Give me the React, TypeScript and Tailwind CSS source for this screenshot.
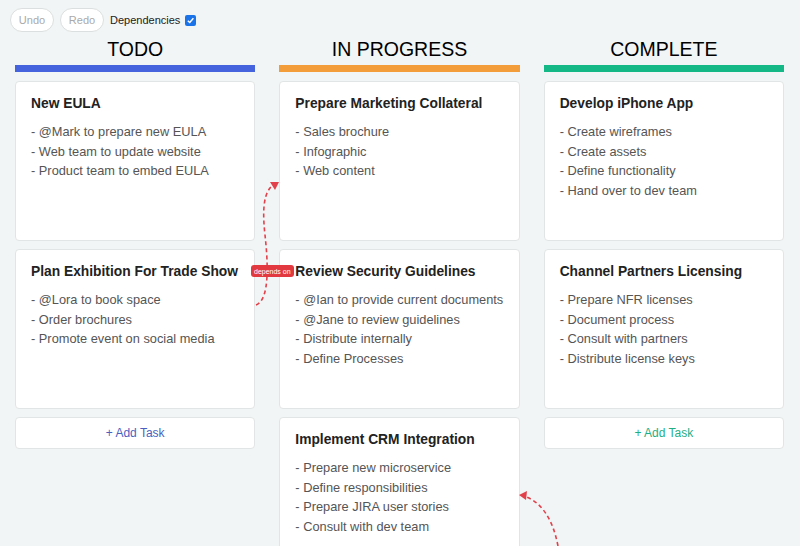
import React from 'react';

type Task = { title: string; items: string[] };

const columns: {
  name: string;
  bar: string;
  add?: string;
  tasks: Task[];
}[] = [
  {
    name: 'TODO',
    bar: 'bg-[#4463dd]',
    add: 'text-[#4a5fc1]',
    tasks: [
      {
        title: 'New EULA',
        items: ['@Mark to prepare new EULA', 'Web team to update website', 'Product team to embed EULA'],
      },
      {
        title: 'Plan Exhibition For Trade Show',
        items: ['@Lora to book space', 'Order brochures', 'Promote event on social media'],
      },
    ],
  },
  {
    name: 'IN PROGRESS',
    bar: 'bg-[#f39c3a]',
    tasks: [
      {
        title: 'Prepare Marketing Collateral',
        items: ['Sales brochure', 'Infographic', 'Web content'],
      },
      {
        title: 'Review Security Guidelines',
        items: [
          '@Ian to provide current documents',
          '@Jane to review guidelines',
          'Distribute internally',
          'Define Processes',
        ],
      },
      {
        title: 'Implement CRM Integration',
        items: [
          'Prepare new microservice',
          'Define responsibilities',
          'Prepare JIRA user stories',
          'Consult with dev team',
        ],
      },
    ],
  },
  {
    name: 'COMPLETE',
    bar: 'bg-[#13b886]',
    add: 'text-[#1fae84]',
    tasks: [
      {
        title: 'Develop iPhone App',
        items: ['Create wireframes', 'Create assets', 'Define functionality', 'Hand over to dev team'],
      },
      {
        title: 'Channel Partners Licensing',
        items: ['Prepare NFR licenses', 'Document process', 'Consult with partners', 'Distribute license keys'],
      },
    ],
  },
];

function Card({ task }: { task: Task }) {
  return (
    <div className="h-[160px] shrink-0 rounded-[4px] border border-[#e2e5e5] bg-white pl-[15px] pr-[8px] pt-[12px]">
      <h3 className="whitespace-nowrap text-[13.8px] font-bold leading-[20px] text-[#222]">{task.title}</h3>
      <ul className="mt-[8px] whitespace-nowrap text-[12.8px] leading-[19.5px] text-[#555]">
        {task.items.map((item) => (
          <li key={item}>- {item}</li>
        ))}
      </ul>
    </div>
  );
}

export default function App() {
  return (
    <div
      className="relative h-[546px] w-[800px] overflow-hidden bg-[#f2f5f5]"
      style={{ fontFamily: '"Liberation Sans", Arial, sans-serif' }}
    >
      {/* toolbar */}
      <div className="flex items-center gap-[6px] pl-[10px] pt-[8px]">
        <button className="h-[24px] w-[44px] rounded-full border border-[#dcdfdf] bg-white text-[11px] text-[#aaa]">
          Undo
        </button>
        <button className="h-[24px] w-[44px] rounded-full border border-[#dcdfdf] bg-white text-[11px] text-[#aaa]">
          Redo
        </button>
        <label className="flex items-center gap-[5px] text-[11px] text-[#222]">
          Dependencies
          <span className="flex h-[11px] w-[11px] items-center justify-center rounded-[2px] bg-[#1a73e8]">
            <svg width="9" height="9" viewBox="0 0 10 10">
              <path d="M2 5.2 L4.2 7.3 L8.2 2.6" stroke="white" strokeWidth="1.6" fill="none" />
            </svg>
          </span>
        </label>
      </div>

      {/* board */}
      <div className="mt-[5px] grid grid-cols-3 gap-6 pl-[15px] pr-[16px]">
        {columns.map((col) => (
          <div key={col.name} className="flex flex-col">
            <h2 className="text-center text-[19.5px] leading-[24px] text-black">{col.name}</h2>
            <div className={`mt-[4px] h-[7px] ${col.bar}`} />
            <div className="mt-[9px] flex flex-col gap-2">
              {col.tasks.map((t) => (
                <Card key={t.title} task={t} />
              ))}
              {col.add && (
                <button
                  className={`h-[32px] rounded-[4px] border border-[#e2e5e5] bg-white text-[12px] ${col.add}`}
                >
                  + Add Task
                </button>
              )}
            </div>
          </div>
        ))}
      </div>

      {/* dependency arrows */}
      <svg className="pointer-events-none absolute left-0 top-0" width="800" height="546">
        <g stroke="#e2404a" strokeWidth="1.6" strokeDasharray="4 3" fill="none">
          <path d="M256 305 C 270 300, 268 262, 265 235 C 262 208, 264 192, 273 185" />
          <path d="M558 546 C 553 520, 542 502, 524 496" />
        </g>
        <path d="M279 182 L270 182 L275 190 Z" fill="#e2404a" />
        <path d="M519 495 L527 491 L526 500 Z" fill="#e2404a" />
      </svg>

      <div className="absolute left-[251px] top-[265px] flex h-[12px] items-center rounded-[3px] bg-[#e2383f] px-[3px] text-[7px] leading-none text-white">
        depends on
      </div>
    </div>
  );
}
